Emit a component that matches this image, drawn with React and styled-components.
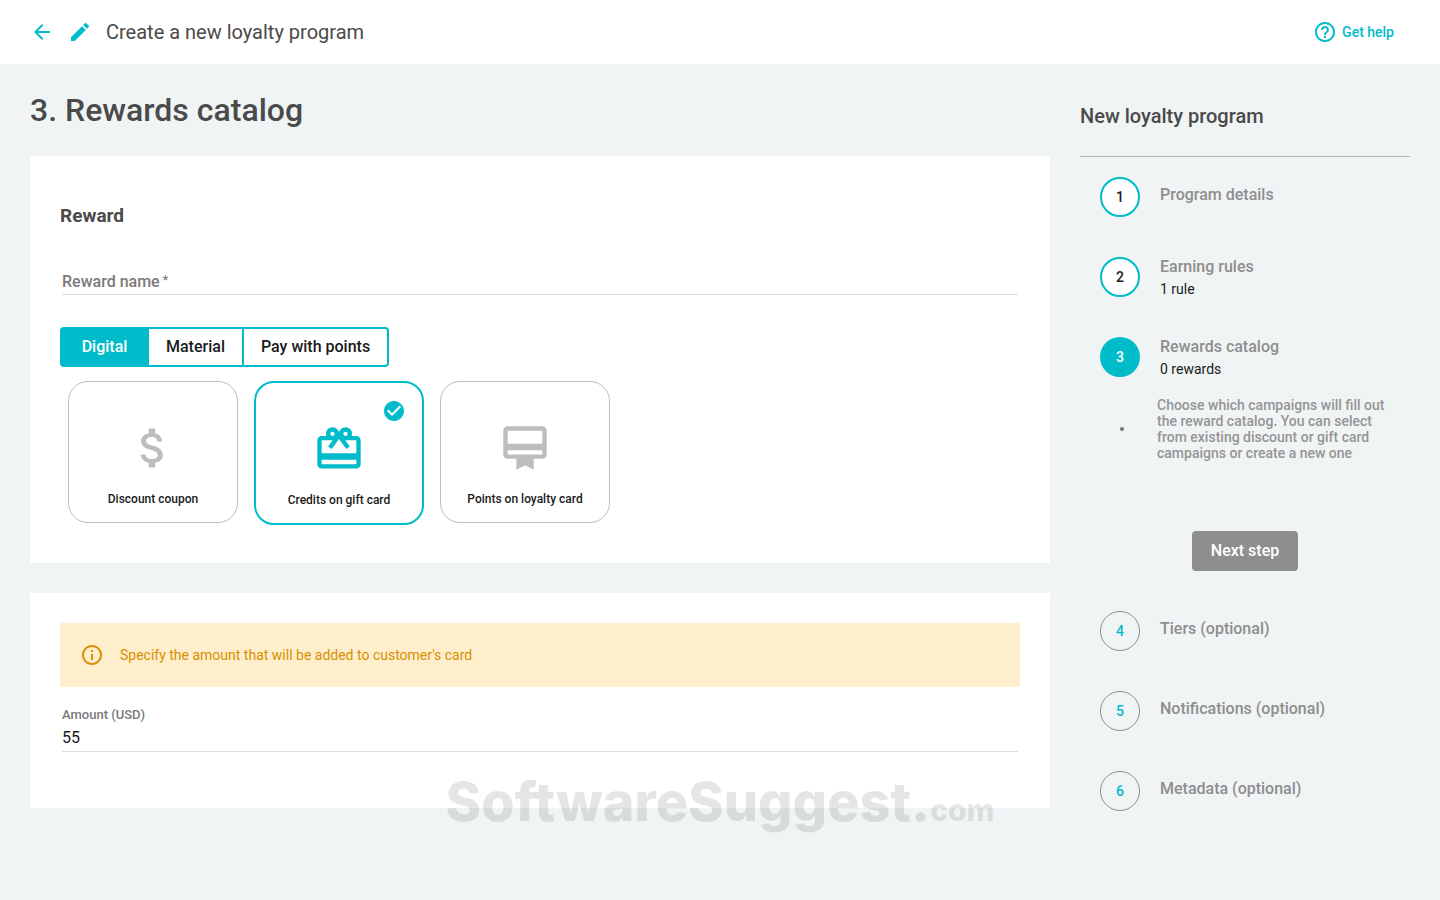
import React, { useState } from 'react';
import styled, { createGlobalStyle } from 'styled-components';
import {
    MdArrowBack,
    MdAttachMoney,
    MdCardGiftcard,
    MdCardMembership,
    MdCheckCircle,
    MdHelpOutline,
    MdInfoOutline,
    MdModeEdit
} from 'react-icons/md';

const teal = '#00bbca';

const GlobalStyle = createGlobalStyle`
    * {
        box-sizing: border-box;
    }
    body {
        margin: 0;
        background: #f0f4f5;
        color: #1a1a1a;
        font-family: Roboto, 'Open Sans', sans-serif;
        font-size: 14px;
    }
    button, input {
        font-family: inherit;
    }
`

const Page = styled.div`
    position: relative;
    min-height: 100vh;
`

const Header = styled.header`
    display: flex;
    align-items: center;
    height: 64px;
    padding: 0 46px 0 30px;
    background: #fff;
`

const IconButton = styled.button`
    display: flex;
    margin: 0 14px 0 0;
    padding: 0;
    border: none;
    background: none;
    color: ${teal};
    cursor: pointer;
`

const HeaderTitle = styled.span`
    flex: 1;
    color: #4a4a4a;
    font-size: 20px;
    line-height: 24px;
`

const HelpLink = styled.a`
    display: flex;
    align-items: center;
    gap: 5px;
    color: ${teal};
    font-weight: 500;
    text-decoration: none;
`

const Content = styled.div`
    display: grid;
    grid-template-columns: minmax(0, 1fr) 330px;
    gap: 30px;
    padding: 0 30px 60px;
`

const PageTitle = styled.h1`
    margin: 26px 0;
    color: #4a4a4a;
    font-size: 32px;
    font-weight: 500;
    line-height: 40px;
`

const Card = styled.section`
    margin-bottom: 30px;
    padding: 30px 30px ${props => props.$bottom};
    background: #fff;
`

const CardTitle = styled.h2`
    margin: 18px 0 42px;
    color: #4a4a4a;
    font-size: 19px;
    font-weight: 700;
    line-height: 24px;
`

const Field = styled.div`
    position: relative;
    margin: 0 2px;
`

const FieldLabel = styled.label`
    position: absolute;
    left: 0;
    color: #7a7a7a;
    font-weight: 500;
    pointer-events: none;
    ${props => props.$floating ?
        `top: -20px;
        font-size: 13px;
        line-height: 16px;` :
        `top: 0;
        font-size: 16px;
        line-height: 24px;`
    }

    sup {
        font-size: 12px;
        line-height: 12px;
        vertical-align: 3px;
    }
`

const FieldInput = styled.input`
    display: block;
    width: 100%;
    height: 25px;
    padding: 0 0 4px;
    border: none;
    border-bottom: 1px solid #dcdcdc;
    outline: none;
    background: none;
    color: #1a1a1a;
    font-size: 16px;
`

const Segments = styled.div`
    display: flex;
    margin: 32px 0 14px;
`

const Segment = styled.button`
    min-width: 89px;
    height: 40px;
    padding: 0 17px 2px;
    border: 2px solid ${teal};
    background: ${props => props.$active ? teal : '#fff'};
    color: ${props => props.$active ? '#fff' : '#1a1a1a'};
    font-size: 16px;
    font-weight: 500;
    cursor: pointer;

    & + & {
        margin-left: -2px;
    }
    &:first-child {
        border-radius: 4px 0 0 4px;
    }
    &:last-child {
        border-radius: 0 4px 4px 0;
    }
`

const RewardTypes = styled.div`
    display: flex;
    align-items: flex-start;
    gap: 16px;
    padding: 0 8px;
`

const RewardType = styled.button`
    position: relative;
    display: flex;
    flex-direction: column;
    align-items: center;
    gap: 17px;
    width: 170px;
    padding: 40px 0 15px;
    border: ${props => props.$selected ? `2px solid ${teal}` : '1px solid #bdbdbd'};
    border-radius: 20px;
    background: #fff;
    color: #1a1a1a;
    font-size: 12px;
    font-weight: 500;
    line-height: 16px;
    cursor: pointer;

    > svg {
        color: ${props => props.$selected ? teal : '#bdbdbd'};
    }
`

const SelectedMark = styled.span`
    position: absolute;
    top: 16px;
    right: 16px;
    display: flex;
    color: ${teal};
`

const Notice = styled.div`
    display: flex;
    align-items: center;
    gap: 16px;
    height: 64px;
    margin-bottom: 40px;
    padding: 0 20px;
    border-radius: 2px;
    background: #ffeecb;
    color: #d69000;
`

const Sidebar = styled.aside`
    padding-top: 40px;
`

const SidebarTitle = styled.h2`
    margin: 0 0 20px;
    padding-bottom: 28px;
    border-bottom: 1px solid #b8b8b8;
    color: #4a4a4a;
    font-size: 20px;
    font-weight: 500;
    line-height: 24px;
`

const Step = styled.div`
    display: flex;
    align-items: center;
    gap: 20px;
    height: 40px;
    margin: 0 20px 40px;
`

const StepNumber = styled.span`
    display: flex;
    align-items: center;
    justify-content: center;
    flex-shrink: 0;
    width: 40px;
    height: 40px;
    border-radius: 50%;
    font-weight: 500;
    ${props => props.$state === 'done' && `border: 2px solid ${teal}; background: #fff;`}
    ${props => props.$state === 'current' && `background: ${teal}; color: #fff;`}
    ${props => props.$state === 'upcoming' && `border: 1px solid #8e8e8e; color: ${teal};`}
`

const StepTitle = styled.div`
    margin-bottom: 4px;
    color: #8e8e8e;
    font-size: 16px;
    font-weight: 500;
    line-height: 20px;
`

const StepInfo = styled.div`
    line-height: 16px;
`

const StepDescription = styled.div`
    display: flex;
    align-items: center;
    gap: 33px;
    margin: -20px 20px 70px 40px;
    color: #959595;
    font-weight: 500;
    line-height: 16px;

    &::before {
        content: '';
        flex-shrink: 0;
        width: 4px;
        height: 4px;
        border-radius: 50%;
        background: #757575;
    }
`

const NextButton = styled.button`
    display: block;
    height: 40px;
    margin: 0 auto 40px;
    padding: 0 19px 2px;
    border: none;
    border-radius: 4px;
    background: #8e8e8e;
    color: #fff;
    font-size: 16px;
    font-weight: 500;
    cursor: pointer;
`

const Watermark = styled.div`
    position: absolute;
    top: 770px;
    left: 0;
    right: 0;
    color: rgba(0, 0, 0, 0.1);
    font-family: Inter, sans-serif;
    font-size: 54px;
    font-weight: 800;
    line-height: 64px;
    text-align: center;
    pointer-events: none;

    small {
        font-size: 30px;
    }
`

const segments = ['Digital', 'Material', 'Pay with points'];

const rewardTypes = [
    { title: 'Discount coupon', Icon: MdAttachMoney },
    { title: 'Credits on gift card', Icon: MdCardGiftcard },
    { title: 'Points on loyalty card', Icon: MdCardMembership }
];

const firstSteps = [
    { number: 1, title: 'Program details', state: 'done' },
    { number: 2, title: 'Earning rules', info: '1 rule', state: 'done' },
    { number: 3, title: 'Rewards catalog', info: '0 rewards', state: 'current' }
];

const nextSteps = [
    { number: 4, title: 'Tiers (optional)', state: 'upcoming' },
    { number: 5, title: 'Notifications (optional)', state: 'upcoming' },
    { number: 6, title: 'Metadata (optional)', state: 'upcoming' }
];

const ProgramStep = ({ number, title, info, state }) => {
    return (
        <Step>
            <StepNumber $state={state}>{number}</StepNumber>
            <div>
                <StepTitle>{title}</StepTitle>
                {info && <StepInfo>{info}</StepInfo>}
            </div>
        </Step>
    )
}

const TextField = ({ id, label, required, value, onChange }) => {
    return (
        <Field>
            <FieldLabel htmlFor={id} $floating={value !== ''}>
                {label}{required && <sup> *</sup>}
            </FieldLabel>
            <FieldInput id={id} value={value} onChange={e => onChange(e.target.value)} />
        </Field>
    )
}

const App = () => {
    const [name, setName] = useState('');
    const [amount, setAmount] = useState('55');
    const [segment, setSegment] = useState('Digital');
    const [type, setType] = useState('Credits on gift card');

    return (
        <Page>
            <GlobalStyle />
            <Header>
                <IconButton aria-label="Back"><MdArrowBack size={24} /></IconButton>
                <IconButton aria-label="Edit"><MdModeEdit size={24} /></IconButton>
                <HeaderTitle>Create a new loyalty program</HeaderTitle>
                <HelpLink href="#help"><MdHelpOutline size={24} />Get help</HelpLink>
            </Header>
            <Content>
                <main>
                    <PageTitle>3. Rewards catalog</PageTitle>
                    <Card $bottom="38px">
                        <CardTitle>Reward</CardTitle>
                        <TextField id="reward-name" label="Reward name" required value={name} onChange={setName} />
                        <Segments>
                            {segments.map(item => (
                                <Segment key={item} $active={item === segment} aria-pressed={item === segment} onClick={() => setSegment(item)}>
                                    {item}
                                </Segment>
                            ))}
                        </Segments>
                        <RewardTypes>
                            {rewardTypes.map(({ title, Icon }) => (
                                <RewardType key={title} $selected={title === type} aria-pressed={title === type} onClick={() => setType(title)}>
                                    <Icon size={52} />
                                    {title}
                                    {title === type && <SelectedMark><MdCheckCircle size={24} /></SelectedMark>}
                                </RewardType>
                            ))}
                        </RewardTypes>
                    </Card>
                    <Card $bottom="56px">
                        <Notice>
                            <MdInfoOutline size={24} />
                            Specify the amount that will be added to customer's card
                        </Notice>
                        <TextField id="amount" label="Amount (USD)" value={amount} onChange={setAmount} />
                    </Card>
                </main>
                <Sidebar>
                    <SidebarTitle>New loyalty program</SidebarTitle>
                    {firstSteps.map(step => <ProgramStep key={step.number} {...step} />)}
                    <StepDescription>
                        Choose which campaigns will fill out the reward catalog. You can select from existing discount or gift card campaigns or create a new one
                    </StepDescription>
                    <NextButton>Next step</NextButton>
                    {nextSteps.map(step => <ProgramStep key={step.number} {...step} />)}
                </Sidebar>
            </Content>
            <Watermark>SoftwareSuggest.<small>com</small></Watermark>
        </Page>
    )
}

export default App;
